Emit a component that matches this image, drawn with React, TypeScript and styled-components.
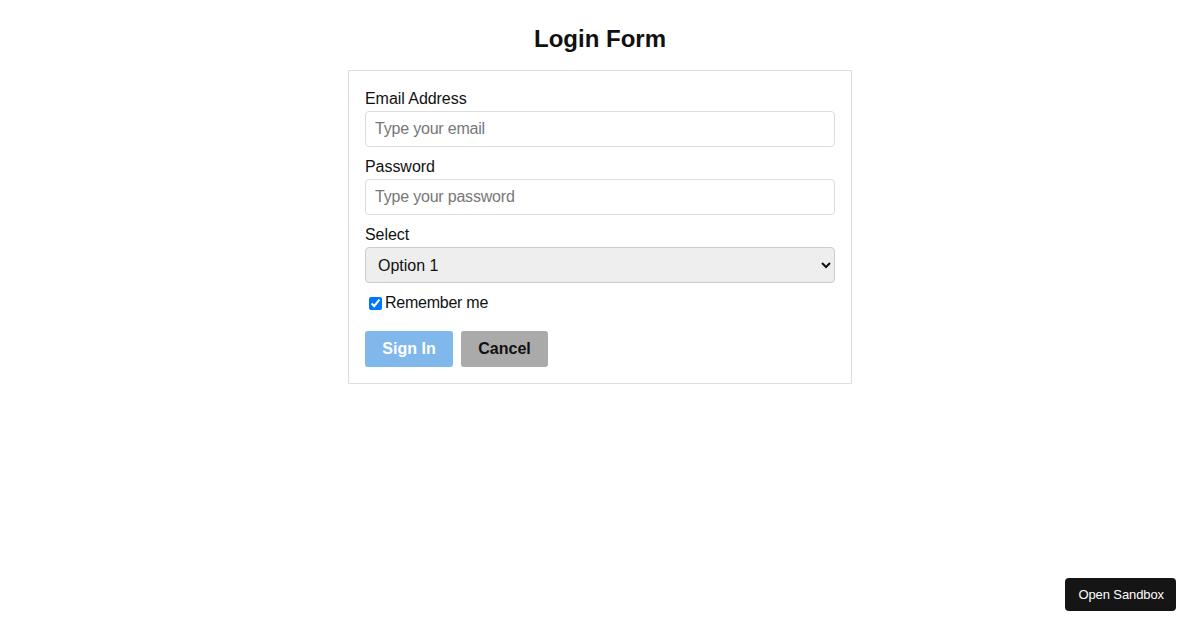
import React, { useState } from "react";
import styled, { createGlobalStyle } from "styled-components";

const GlobalStyle = createGlobalStyle`
  body {
    margin: 0;
    font-family: "Liberation Sans", Arial, sans-serif;
    color: #111;
    background: #fff;
  }
`;

const Page = styled.div`
  display: flex;
  flex-direction: column;
  align-items: center;
  padding-top: 25px;
`;

const Title = styled.h1`
  margin: 0 0 17px;
  font-size: 24px;
  line-height: 28px;
  font-weight: bold;
`;

const Card = styled.form`
  width: 470px;
  padding: 16px;
  border: 1px solid #ddd;
  display: flex;
  flex-direction: column;
`;

const Field = styled.div`
  display: flex;
  flex-direction: column;
  gap: 1px;
  margin-bottom: 8px;
`;

const Label = styled.label`
  padding-top: 1px;
  font-size: 16px;
  line-height: 22px;
  letter-spacing: -0.05px;
`;

const Input = styled.input`
  box-sizing: border-box;
  height: 36px;
  padding: 0 9px;
  border: 1px solid #ddd;
  border-radius: 4px;
  font-family: inherit;
  font-size: 16px;
  color: #111;
  outline: none;

  &::placeholder {
    color: #777;
    letter-spacing: -0.2px;
  }
`;

const Select = styled.select`
  box-sizing: border-box;
  height: 36px;
  padding: 0 8px;
  border: 1px solid #ccc;
  border-radius: 4px;
  background: #eee;
  font-family: inherit;
  font-size: 16px;
  color: #111;
`;

const CheckRow = styled.label`
  display: flex;
  align-items: center;
  font-size: 16px;
  line-height: 24px;
  letter-spacing: -0.25px;
  margin-bottom: 16px;
`;

const Check = styled.input`
  margin: 3px 3px 3px 4px;
`;

const Actions = styled.div`
  display: flex;
  gap: 8px;
`;

const Button = styled.button<{ $variant: "primary" | "secondary" }>`
  height: 36px;
  padding: 0 17px;
  border: none;
  border-radius: 3px;
  font-family: inherit;
  font-size: 16px;
  font-weight: bold;
  cursor: pointer;
  background: ${(p) => (p.$variant === "primary" ? "#80b8ec" : "#aaa")};
  color: ${(p) => (p.$variant === "primary" ? "#fff" : "#111")};
  min-width: ${(p) => (p.$variant === "primary" ? "88px" : "87px")};
`;

const SandboxButton = styled.a`
  position: fixed;
  right: 24px;
  bottom: 19px;
  height: 33px;
  padding: 0 12px 0 13px;
  display: flex;
  align-items: center;
  background: #151515;
  color: #fff;
  border-radius: 4px;
  font-size: 13px;
  letter-spacing: -0.1px;
  text-decoration: none;
`;

export default function App() {
  const [remember, setRemember] = useState(true);

  return (
    <>
      <GlobalStyle />
      <Page>
        <Title>Login Form</Title>
        <Card onSubmit={(e) => e.preventDefault()}>
          <Field>
            <Label htmlFor="email">Email Address</Label>
            <Input id="email" type="email" placeholder="Type your email" />
          </Field>
          <Field>
            <Label htmlFor="password">Password</Label>
            <Input id="password" type="password" placeholder="Type your password" />
          </Field>
          <Field>
            <Label htmlFor="select">Select</Label>
            <Select id="select" defaultValue="1">
              <option value="1">Option 1</option>
              <option value="2">Option 2</option>
              <option value="3">Option 3</option>
            </Select>
          </Field>
          <CheckRow>
            <Check type="checkbox" checked={remember} onChange={(e) => setRemember(e.target.checked)} />
            Remember me
          </CheckRow>
          <Actions>
            <Button type="submit" $variant="primary">Sign In</Button>
            <Button type="button" $variant="secondary">Cancel</Button>
          </Actions>
        </Card>
      </Page>
      <SandboxButton href="#">Open Sandbox</SandboxButton>
    </>
  );
}
